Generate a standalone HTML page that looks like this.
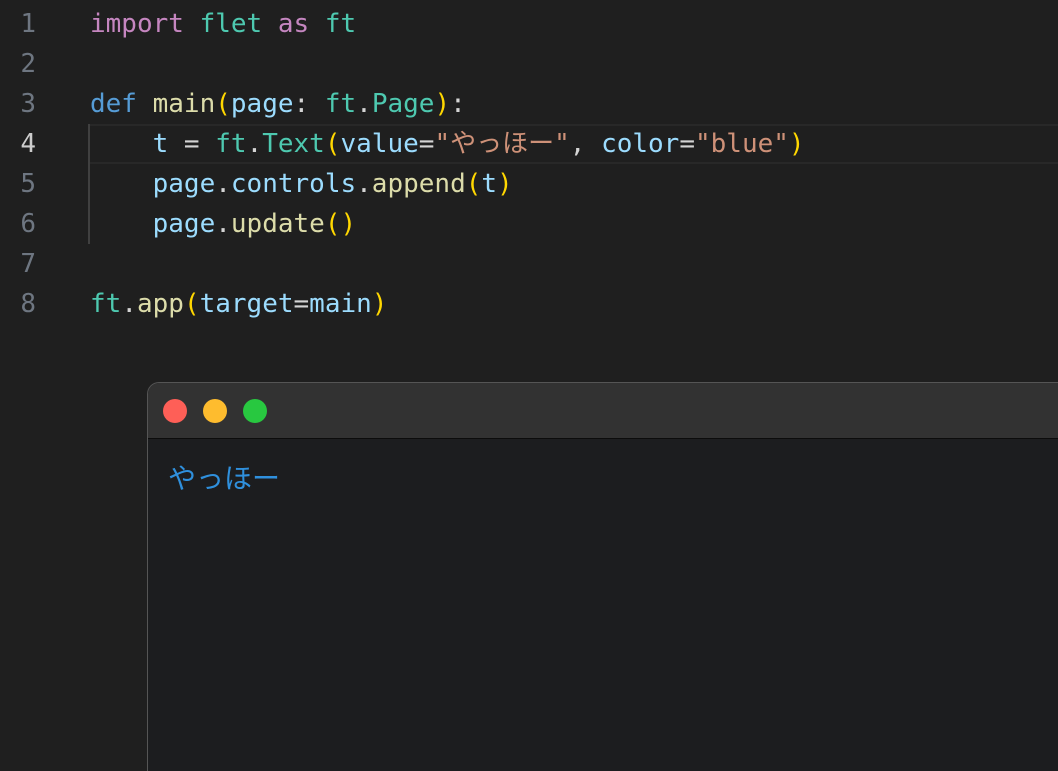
<!DOCTYPE html>
<html><head><meta charset="utf-8"><style>
html,body{margin:0;padding:0;width:1058px;height:770px;overflow:hidden;background:#1f1f1f;}
.code{position:absolute;left:0;top:4px;font-family:"DejaVu Sans Mono","Noto Sans CJK JP",monospace;font-size:26px;line-height:40px;color:#d4d4d4;}
.ln{position:absolute;left:0;width:36px;text-align:right;color:#6e7681;}
.ln.cur{color:#cccccc;}
.tx{position:absolute;left:90px;white-space:pre;}
.k{color:#c586c0}.m{color:#4ec9b0}.d{color:#569cd6}.f{color:#dcdcaa}.v{color:#9cdcfe}.y{color:#ffd700}.s{color:#ce9178}
.hl{position:absolute;left:89px;top:124px;width:980px;height:36px;border:2px solid #282828;border-left:none;}
.guide{position:absolute;left:88px;top:124px;width:2px;height:120px;background:#404040;}
.win{position:absolute;left:147px;top:382px;width:930px;height:388px;border-radius:12px 12px 0 0;border:1px solid #555;border-bottom:none;background:#1c1d1f;overflow:hidden;}
.bar{height:55px;background:#323232;border-bottom:1px solid #0c0c0c;position:relative;}
.dot{position:absolute;top:16px;width:24px;height:24px;border-radius:50%;}
.jp{position:absolute;left:20px;top:74px;font-family:"Noto Sans CJK JP",sans-serif;font-size:28px;color:#2f90dd;}
</style></head><body>
<div class="hl"></div><div class="guide"></div>
<div class="code">
<div class="ln" style="top:0">1</div>
<div class="ln" style="top:40px">2</div>
<div class="ln" style="top:80px">3</div>
<div class="ln cur" style="top:120px">4</div>
<div class="ln" style="top:160px">5</div>
<div class="ln" style="top:200px">6</div>
<div class="ln" style="top:240px">7</div>
<div class="ln" style="top:280px">8</div>
<div class="tx" style="top:0"><span class="k">import</span> <span class="m">flet</span> <span class="k">as</span> <span class="m">ft</span></div>
<div class="tx" style="top:80px"><span class="d">def</span> <span class="f">main</span><span class="y">(</span><span class="v">page</span>: <span class="m">ft</span>.<span class="m">Page</span><span class="y">)</span>:</div>
<div class="tx" style="top:120px">    <span class="v">t</span> = <span class="m">ft</span>.<span class="m">Text</span><span class="y">(</span><span class="v">value</span>=<span class="s">"やっほー"</span>, <span class="v">color</span>=<span class="s">"blue"</span><span class="y">)</span></div>
<div class="tx" style="top:160px">    <span class="v">page</span>.<span class="v">controls</span>.<span class="f">append</span><span class="y">(</span><span class="v">t</span><span class="y">)</span></div>
<div class="tx" style="top:200px">    <span class="v">page</span>.<span class="f">update</span><span class="y">()</span></div>
<div class="tx" style="top:280px"><span class="m">ft</span>.<span class="f">app</span><span class="y">(</span><span class="v">target</span>=<span class="v">main</span><span class="y">)</span></div>
</div>
<div class="win">
<div class="bar">
<div class="dot" style="left:15px;background:#fe5f57"></div>
<div class="dot" style="left:55px;background:#febc2e"></div>
<div class="dot" style="left:95px;background:#28c840"></div>
</div>
<div class="jp">やっほー</div>
</div>
</body></html>
